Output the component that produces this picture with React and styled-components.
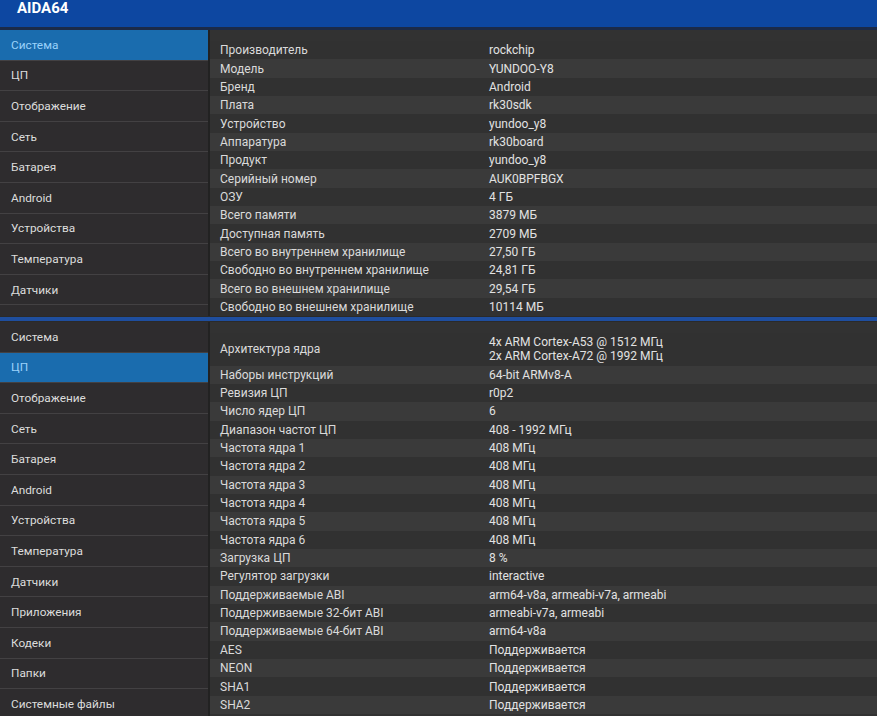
import React from "react"
import styled, { createGlobalStyle } from "styled-components"

const Global = createGlobalStyle`
  html, body { margin: 0; padding: 0; background: #2f2f2f; }
  body { font-family: Roboto, "Noto Sans", "Liberation Sans", sans-serif; }
`

const Page = styled.div`
  width: 877px;
  height: 716px;
  overflow: hidden;
  display: flex;
  flex-direction: column;
`

const Header = styled.div`
  height: 27px;
  background: #0d47a1;
  border-bottom: 3px solid #1b2a48;
  display: flex;
  align-items: flex-start;
  padding-left: 17px;
`

const Title = styled.div`
  color: #fff;
  font-weight: 700;
  font-size: 15px;
  line-height: 16px;
`

const Panel = styled.div`
  height: ${p => p.h}px;
  overflow: hidden;
  display: grid;
  grid-template-columns: 210px 1fr;
  background: #323232;
`

const Sidebar = styled.div`
  background: #2e2c2e;
  border-right: 2px solid #222;
  display: flex;
  flex-direction: column;
`

const Item = styled.div`
  flex: 0 0 auto;
  height: 29.6px;
  border-bottom: 1px solid #434143;
  background: ${p => (p.active ? "#1a6cae" : "transparent")};
  color: ${p => (p.active ? "#9ad2fb" : "#dcdcdc")};
  font-size: 11.8px;
  display: flex;
  align-items: center;
  padding-left: 11px;
`

const Content = styled.div`
  padding-top: ${p => p.pt}px;
  display: flex;
  flex-direction: column;
`

const Row = styled.div`
  display: grid;
  grid-template-columns: 269px 1fr;
  align-items: center;
  box-sizing: border-box;
  height: ${p => (p.tall ? "33px" : "18.35px")};
  background: ${p => (p.light ? "#3a3a3a" : "#313131")};
  color: #dadada;
  font-size: 12px;
  line-height: 14px;
  padding-left: 10px;
`

const Value = styled.div`
  white-space: pre-line;
  color: #e2e2e2;
`

const Divider = styled.div`
  height: 6px;
  background: #2a2a2a;
  display: flex;
  flex-direction: column;
  justify-content: center;
  &::after {
    content: "";
    height: 4px;
    background: #1f4e9e;
  }
`

const menuTop = ["Система", "ЦП", "Отображение", "Сеть", "Батарея", "Android", "Устройства", "Температура", "Датчики", "Приложения"]
const menuBottom = ["Система", "ЦП", "Отображение", "Сеть", "Батарея", "Android", "Устройства", "Температура", "Датчики", "Приложения", "Кодеки", "Папки", "Системные файлы"]

const sysRows = [
  ["Производитель", "rockchip"],
  ["Модель", "YUNDOO-Y8"],
  ["Бренд", "Android"],
  ["Плата", "rk30sdk"],
  ["Устройство", "yundoo_y8"],
  ["Аппаратура", "rk30board"],
  ["Продукт", "yundoo_y8"],
  ["Серийный номер", "AUK0BPFBGX"],
  ["ОЗУ", "4 ГБ"],
  ["Всего памяти", "3879 МБ"],
  ["Доступная память", "2709 МБ"],
  ["Всего во внутреннем хранилище", "27,50 ГБ"],
  ["Свободно во внутреннем хранилище", "24,81 ГБ"],
  ["Всего во внешнем хранилище", "29,54 ГБ"],
  ["Свободно во внешнем хранилище", "10114 МБ"],
]

const cpuRows = [
  ["Архитектура ядра", "4x ARM Cortex-A53 @ 1512 МГц\n2x ARM Cortex-A72 @ 1992 МГц"],
  ["Наборы инструкций", "64-bit ARMv8-A"],
  ["Ревизия ЦП", "r0p2"],
  ["Число ядер ЦП", "6"],
  ["Диапазон частот ЦП", "408 - 1992 МГц"],
  ["Частота ядра 1", "408 МГц"],
  ["Частота ядра 2", "408 МГц"],
  ["Частота ядра 3", "408 МГц"],
  ["Частота ядра 4", "408 МГц"],
  ["Частота ядра 5", "408 МГц"],
  ["Частота ядра 6", "408 МГц"],
  ["Загрузка ЦП", "8 %"],
  ["Регулятор загрузки", "interactive"],
  ["Поддерживаемые ABI", "arm64-v8a, armeabi-v7a, armeabi"],
  ["Поддерживаемые 32-бит ABI", "armeabi-v7a, armeabi"],
  ["Поддерживаемые 64-бит ABI", "arm64-v8a"],
  ["AES", "Поддерживается"],
  ["NEON", "Поддерживается"],
  ["SHA1", "Поддерживается"],
  ["SHA2", "Поддерживается"],
]

const Screen = ({ h, pt, menu, active, rows }) => (
  <Panel h={h}>
    <Sidebar>
      {menu.map(m => (
        <Item key={m} active={m === active}>{m}</Item>
      ))}
    </Sidebar>
    <Content pt={pt}>
      {rows.map(([k, v], i) => (
        <Row key={k} light={i % 2 === 1} tall={v.includes("\n")}>
          <div>{k}</div>
          <Value>{v}</Value>
        </Row>
      ))}
    </Content>
  </Panel>
)

const App = () => {
  return (
    <Page>
      <Global />
      <Header>
        <Title>AIDA64</Title>
      </Header>
      <Screen h={286} pt={11} menu={menuTop} active="Система" rows={sysRows} />
      <Divider />
      <Screen h={394} pt={10.5} menu={menuBottom} active="ЦП" rows={cpuRows} />
    </Page>
  )
}

export default App
